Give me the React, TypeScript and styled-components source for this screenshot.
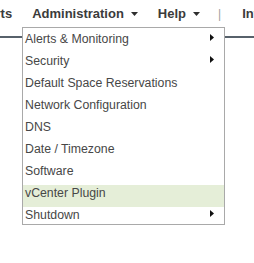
import React from "react";
import styled, { createGlobalStyle } from "styled-components";

const GlobalStyle = createGlobalStyle`
  html, body {
    margin: 0;
    padding: 0;
    background: #ffffff;
    font-family: "Liberation Sans", Arial, sans-serif;
  }
`;

const Page = styled.div`
  position: relative;
  width: 254px;
  height: 263px;
  overflow: hidden;
  background: #ffffff;
`;

const NavBar = styled.nav`
  display: flex;
  align-items: flex-start;
  gap: 20px;
  height: 36px;
  box-sizing: border-box;
  padding-top: 6px;
  white-space: nowrap;
`;

const NavItem = styled.div<{ $offset?: number }>`
  display: flex;
  align-items: center;
  gap: 7px;
  margin-left: ${(p) => (p.$offset ? `${p.$offset}px` : "0")};
  font-size: 13px;
  line-height: 16px;
  font-weight: bold;
  color: #3b3b3b;
  flex-shrink: 0;
`;

const Separator = styled.div`
  margin: 0 1px 0 -2px;
  font-size: 12px;
  line-height: 16px;
  color: #a0a0a0;
  flex-shrink: 0;
`;

const Rule = styled.div`
  height: 2px;
  background: #57616b;
`;

const Dropdown = styled.ul`
  position: absolute;
  top: 27px;
  left: 22px;
  width: 201px;
  margin: 0;
  padding: 3px 0 0;
  list-style: none;
  background: #ffffff;
  border: 1px solid #a9a9a9;
`;

const MenuItem = styled.li<{ $active?: boolean }>`
  display: flex;
  align-items: flex-start;
  justify-content: space-between;
  padding: 0 10px 6px 2px;
  font-size: 12.3px;
  line-height: 16px;
  color: #474747;
  background: ${(p) => (p.$active ? "#e5eed8" : "transparent")};
  &:last-child {
    padding-bottom: 1px;
  }
`;

const Arrow = styled.svg`
  margin-top: 3px;
  flex-shrink: 0;
`;

const Caret = () => (
  <svg width="7" height="4" viewBox="0 0 7 4" aria-hidden>
    <polygon points="0,0 7,0 3.5,4" fill="#2e2e2e" />
  </svg>
);

const SubArrow = () => (
  <Arrow width="4" height="7" viewBox="0 0 4 7" aria-hidden>
    <polygon points="0,0 4,3.5 0,7" fill="#111111" />
  </Arrow>
);

const items: { label: string; sub?: boolean; active?: boolean }[] = [
  { label: "Alerts & Monitoring", sub: true },
  { label: "Security", sub: true },
  { label: "Default Space Reservations" },
  { label: "Network Configuration" },
  { label: "DNS" },
  { label: "Date / Timezone" },
  { label: "Software" },
  { label: "vCenter Plugin", active: true },
  { label: "Shutdown", sub: true },
];

export default function App() {
  return (
    <Page>
      <GlobalStyle />
      <NavBar>
        <NavItem $offset={-37}>Reports</NavItem>
        <NavItem>
          Administration
          <Caret />
        </NavItem>
        <NavItem>
          Help
          <Caret />
        </NavItem>
        <Separator>|</Separator>
        <NavItem>Information</NavItem>
      </NavBar>
      <Rule />
      <Dropdown>
        {items.map((it) => (
          <MenuItem key={it.label} $active={it.active}>
            <span>{it.label}</span>
            {it.sub && <SubArrow />}
          </MenuItem>
        ))}
      </Dropdown>
    </Page>
  );
}
